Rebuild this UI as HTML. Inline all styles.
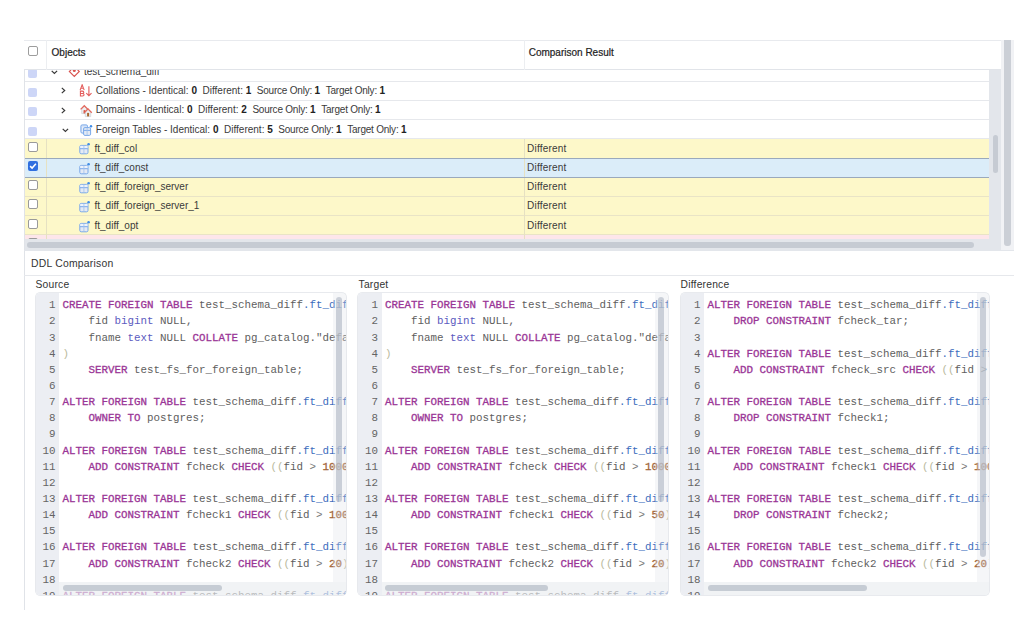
<!DOCTYPE html>
<html><head><meta charset="utf-8"><style>
*{margin:0;padding:0;box-sizing:border-box}
html,body{width:1024px;height:621px;overflow:hidden;background:#fff}
body{position:relative;font-family:"Liberation Sans",sans-serif;font-size:10px;color:#3a3a3a}
.a{position:absolute}
.t{position:absolute;white-space:pre;line-height:12px}
.hl{position:absolute;height:1px;background:#e3e6eb}
.vl{position:absolute;width:1px;background:#e3e6eb}
.sq{position:absolute;left:28px;width:9px;height:9px;border-radius:2px;background:#cdd6f7}
.cb{position:absolute;left:28px;width:10px;height:10px;border-radius:2px;border:1px solid #9a9a9a;background:#fff}
b{font-weight:bold;color:#222}
.ls{letter-spacing:-0.22px}
.code{position:absolute;top:292.5px;width:310px;height:302.5px;border-radius:4px;background:#fff;overflow:hidden;box-shadow:0 0 0 0.8px #e1e4e9}
.gut{position:absolute;left:0;top:0;width:23.5px;height:100%;background:#eceef3}
.lines{position:absolute;left:0;top:0;width:100%;font-family:"Liberation Mono",monospace;font-size:10.83px;line-height:16.15px;color:#5e5e5e;white-space:pre}
.ln{position:absolute;left:0;width:20px;text-align:right;color:#646464}
.cl{position:absolute;left:27px}
.k{color:#9a3596;-webkit-text-stroke:0.3px #9a3596}
.v{color:#3d6dbd}
.ty{color:#5b5bc0}
.br{color:#b9b99c}
.n{color:#a2663a;-webkit-text-stroke:0.3px #a2663a}
.op{color:#777}
.vtrack{position:absolute;top:0;right:0;width:12.5px;height:289.5px;background:rgba(222,226,232,0.3)}
.vthumb{position:absolute;top:4px;right:3.4px;width:6px;height:197px;border-radius:3px;background:rgba(184,191,203,0.7)}
.htrack{position:absolute;left:23.5px;bottom:0;right:0;height:13px;background:rgba(234,236,240,0.65)}
.hthumb{position:absolute;bottom:4px;height:5.6px;border-radius:3px;background:rgba(190,196,206,0.85)}
</style></head><body>
<div class="vl" style="left:24px;top:40px;height:570px;background:#e0e3e8"></div>
<div class="a" style="left:25px;top:70px;width:964px;height:169px;overflow:hidden">
<div class="a" style="left:0;top:-8.20px;width:964px;height:20.20px;background:#fff"></div>
<div class="a" style="left:0;top:11.00px;width:964px;height:20.30px;background:#fff"></div>
<div class="a" style="left:0;top:30.30px;width:964px;height:20.20px;background:#fff"></div>
<div class="a" style="left:0;top:49.50px;width:964px;height:20.30px;background:#fff"></div>
<div class="a" style="left:0;top:68.80px;width:964px;height:20.40px;background:#fdf8c9"></div>
<div class="a" style="left:0;top:88.20px;width:964px;height:19.80px;background:#dbedf9"></div>
<div class="a" style="left:0;top:107.00px;width:964px;height:20.40px;background:#fdf8c9"></div>
<div class="a" style="left:0;top:126.40px;width:964px;height:20.50px;background:#fdf8c9"></div>
<div class="a" style="left:0;top:145.90px;width:964px;height:20.00px;background:#fdf8c9"></div>
<div class="a" style="left:0;top:164.90px;width:964px;height:20.10px;background:#fde6ea"></div>
<div class="a" style="left:0;top:10.50px;width:964px;height:1px;background:#e6e8ec"></div>
<div class="a" style="left:0;top:29.80px;width:964px;height:1px;background:#e6e8ec"></div>
<div class="a" style="left:0;top:49.00px;width:964px;height:1px;background:#e6e8ec"></div>
<div class="a" style="left:0;top:68.30px;width:964px;height:1px;background:#e6e8ec"></div>
<div class="a" style="left:0;top:125.90px;width:964px;height:1px;background:#e9e4c6"></div>
<div class="a" style="left:0;top:145.40px;width:964px;height:1px;background:#e9e4c6"></div>
<div class="a" style="left:0;top:164.40px;width:964px;height:1px;background:#e9e4c6"></div>
<div class="a" style="left:0;top:183.50px;width:964px;height:1px;background:#e6e8ec"></div>
<div class="a" style="left:21px;top:68.80px;width:1px;height:115.20px;background:#e6e1c2"></div>
<div class="a" style="left:499px;top:68.80px;width:1px;height:115.20px;background:#e6e1c2"></div>
<div class="a" style="left:0;top:88px;width:964px;height:1px;background:#9aa9bc"></div>
<div class="a" style="left:0;top:107px;width:964px;height:1px;background:#9aa9bc"></div>
<div class="sq" style="left:3.2px;top:-1.10px"></div>
<svg class="a" style="left:25.80px;top:0.10px" width="7" height="5" viewBox="0 0 7 5"><path d="M0.7 0.8 L3.4 3.5 L6.1 0.8" fill="none" stroke="#383838" stroke-width="1.2"/></svg>
<svg class="a" style="left:43.3px;top:-4.8000000000000025px" width="13" height="13" viewBox="0 0 13 13"><path d="M6.3 1.5 L11.3 6.5 L6.3 11.5 L1.3 6.5 Z" fill="none" stroke="#d9534f" stroke-width="1.1"/><circle cx="6.3" cy="5.6" r="1.5" fill="#d9534f"/></svg>
<div class="t" style="left:59px;top:-4.20px">test_schema_diff</div>
<div class="sq" style="left:3.2px;top:18.10px"></div>
<svg class="a" style="left:36.00px;top:17.40px" width="5" height="7" viewBox="0 0 5 7"><path d="M0.8 0.9 L3.7 3.5 L0.8 6.1" fill="none" stroke="#383838" stroke-width="1.2"/></svg>
<svg class="a" style="left:54.3px;top:14.4px" width="14" height="13" viewBox="0 0 14 13"><path d="M1.1 6.1 L3.15 0.7 L5.2 6.1 M1.8 4.3 H4.5" fill="none" stroke="#e35b5b" stroke-width="1.05"/><path d="M1.4 7.1 H3.3 Q4.8 7.1 4.8 8.5 Q4.8 9.4 3.4 9.4 H1.4 M3.4 9.4 Q5.1 9.4 5.1 10.8 Q5.1 11.9 3.4 11.9 H1.4 M1.4 6.6 V12.4" fill="none" stroke="#e35b5b" stroke-width="1.05"/><path d="M9.9 2.2 V11.6 M7.3 9.1 L9.9 11.8 L12.5 9.1" fill="none" stroke="#e35b5b" stroke-width="1.1"/></svg>
<div class="t" style="left:70.8px;top:15.00px">Collations - Identical: <b>0</b>  Different: <b>1</b>  <span class="ls">Source Only: </span><b>1</b>  <span class="ls">Target Only: </span><b>1</b></div>
<div class="sq" style="left:3.2px;top:37.40px"></div>
<svg class="a" style="left:36.00px;top:36.70px" width="5" height="7" viewBox="0 0 5 7"><path d="M0.8 0.9 L3.7 3.5 L0.8 6.1" fill="none" stroke="#383838" stroke-width="1.2"/></svg>
<svg class="a" style="left:54.3px;top:33.699999999999996px" width="14" height="14" viewBox="0 0 14 14"><g transform="translate(0.7,-0.2)"><path d="M2 5 L4.6 2.6 L7.2 5 V9.8 H2 Z" fill="#eef0f2" stroke="#c3c9cf" stroke-width="0.6"/><path d="M0.9 5.6 L4.6 1.9 L8.3 5.6" fill="none" stroke="#e36a5f" stroke-width="1.3"/><rect x="3.9" y="6.4" width="1.7" height="3.2" fill="#d2452e"/><path d="M5.6 8.3 L8.3 5.8 L11 8.3 V12.8 H5.6 Z" fill="#eef0f2" stroke="#c3c9cf" stroke-width="0.6"/><path d="M4.5 8.9 L8.3 5.1 L12.1 8.9" fill="none" stroke="#e36a5f" stroke-width="1.3"/><rect x="7.4" y="9.1" width="2" height="3.5" fill="#a8672e"/></g></svg>
<div class="t" style="left:70.8px;top:34.30px">Domains - Identical: <b>0</b>  Different: <b>2</b>  <span class="ls">Source Only: </span><b>1</b>  <span class="ls">Target Only: </span><b>1</b></div>
<div class="sq" style="left:3.2px;top:56.60px"></div>
<svg class="a" style="left:36.70px;top:57.80px" width="7" height="5" viewBox="0 0 7 5"><path d="M0.7 0.8 L3.4 3.5 L6.1 0.8" fill="none" stroke="#383838" stroke-width="1.2"/></svg>
<svg class="a" style="left:54.3px;top:52.9px" width="14" height="14" viewBox="0 0 14 14"><rect x="1.9" y="1.9" width="6.6" height="8.2" rx="1.3" fill="#d6e4f8" stroke="#7aa9e9" stroke-width="1"/><path d="M3.6 4 V9" stroke="#eef3fb" stroke-width="0.9"/><rect x="4.6" y="4.6" width="7" height="7.8" rx="1.3" fill="#e4eaf4" stroke="#7aa9e9" stroke-width="1"/><path d="M4.8 7.4 H11.4" stroke="#7aa9e9" stroke-width="1"/><path d="M8.1 4.8 V12.2" stroke="#9fc0ee" stroke-width="0.8"/><circle cx="12" cy="3.3" r="1.2" fill="#3f8ce6"/></svg>
<div class="t" style="left:70.8px;top:53.50px">Foreign Tables - Identical: <b>0</b>  Different: <b>5</b>  <span class="ls">Source Only: </span><b>1</b>  <span class="ls">Target Only: </span><b>1</b></div>
<div class="cb" style="left:3px;top:71.70px"></div>
<svg class="a" style="left:53.0px;top:72.4px" width="13" height="13" viewBox="0 0 13 13"><rect x="1.8" y="3.4" width="8.2" height="8.4" rx="1.4" fill="#e4eaf4" stroke="#7aa9e9" stroke-width="1"/><rect x="2.3" y="3.9" width="7.2" height="2.5" fill="#eef3fb"/><path d="M2 6.7 H9.8" stroke="#7aa9e9" stroke-width="1"/><path d="M5.9 3.6 V11.6" stroke="#9fc0ee" stroke-width="0.8"/><circle cx="10.6" cy="2.3" r="1.3" fill="#3f8ce6"/></svg>
<div class="t" style="left:69.5px;top:72.80px">ft_diff_col</div>
<div class="t" style="left:502px;top:72.80px;letter-spacing:0.22px">Different</div>
<svg class="a" style="left:3px;top:91.10px" width="10" height="10" viewBox="0 0 10 10"><rect x="0" y="0" width="10" height="10" rx="2" fill="#2f6fe0"/><path d="M2.1 5.1 L4.1 7.1 L7.9 2.8" fill="none" stroke="#fff" stroke-width="1.5"/></svg>
<svg class="a" style="left:53.0px;top:91.79999999999998px" width="13" height="13" viewBox="0 0 13 13"><rect x="1.8" y="3.4" width="8.2" height="8.4" rx="1.4" fill="#e4eaf4" stroke="#7aa9e9" stroke-width="1"/><rect x="2.3" y="3.9" width="7.2" height="2.5" fill="#eef3fb"/><path d="M2 6.7 H9.8" stroke="#7aa9e9" stroke-width="1"/><path d="M5.9 3.6 V11.6" stroke="#9fc0ee" stroke-width="0.8"/><circle cx="10.6" cy="2.3" r="1.3" fill="#3f8ce6"/></svg>
<div class="t" style="left:69.5px;top:92.20px">ft_diff_const</div>
<div class="t" style="left:502px;top:92.20px;letter-spacing:0.22px">Different</div>
<div class="cb" style="left:3px;top:109.90px"></div>
<svg class="a" style="left:53.0px;top:110.6px" width="13" height="13" viewBox="0 0 13 13"><rect x="1.8" y="3.4" width="8.2" height="8.4" rx="1.4" fill="#e4eaf4" stroke="#7aa9e9" stroke-width="1"/><rect x="2.3" y="3.9" width="7.2" height="2.5" fill="#eef3fb"/><path d="M2 6.7 H9.8" stroke="#7aa9e9" stroke-width="1"/><path d="M5.9 3.6 V11.6" stroke="#9fc0ee" stroke-width="0.8"/><circle cx="10.6" cy="2.3" r="1.3" fill="#3f8ce6"/></svg>
<div class="t" style="left:69.5px;top:111.00px">ft_diff_foreign_server</div>
<div class="t" style="left:502px;top:111.00px;letter-spacing:0.22px">Different</div>
<div class="cb" style="left:3px;top:129.30px"></div>
<svg class="a" style="left:53.0px;top:130.0px" width="13" height="13" viewBox="0 0 13 13"><rect x="1.8" y="3.4" width="8.2" height="8.4" rx="1.4" fill="#e4eaf4" stroke="#7aa9e9" stroke-width="1"/><rect x="2.3" y="3.9" width="7.2" height="2.5" fill="#eef3fb"/><path d="M2 6.7 H9.8" stroke="#7aa9e9" stroke-width="1"/><path d="M5.9 3.6 V11.6" stroke="#9fc0ee" stroke-width="0.8"/><circle cx="10.6" cy="2.3" r="1.3" fill="#3f8ce6"/></svg>
<div class="t" style="left:69.5px;top:130.40px">ft_diff_foreign_server_1</div>
<div class="t" style="left:502px;top:130.40px;letter-spacing:0.22px">Different</div>
<div class="cb" style="left:3px;top:148.80px"></div>
<svg class="a" style="left:53.0px;top:149.5px" width="13" height="13" viewBox="0 0 13 13"><rect x="1.8" y="3.4" width="8.2" height="8.4" rx="1.4" fill="#e4eaf4" stroke="#7aa9e9" stroke-width="1"/><rect x="2.3" y="3.9" width="7.2" height="2.5" fill="#eef3fb"/><path d="M2 6.7 H9.8" stroke="#7aa9e9" stroke-width="1"/><path d="M5.9 3.6 V11.6" stroke="#9fc0ee" stroke-width="0.8"/><circle cx="10.6" cy="2.3" r="1.3" fill="#3f8ce6"/></svg>
<div class="t" style="left:69.5px;top:149.90px">ft_diff_opt</div>
<div class="t" style="left:502px;top:149.90px;letter-spacing:0.22px">Different</div>
<div class="cb" style="left:3px;top:167.80px"></div>
<svg class="a" style="left:53.0px;top:168.5px" width="13" height="13" viewBox="0 0 13 13"><rect x="1.8" y="3.4" width="8.2" height="8.4" rx="1.4" fill="#e4eaf4" stroke="#7aa9e9" stroke-width="1"/><rect x="2.3" y="3.9" width="7.2" height="2.5" fill="#eef3fb"/><path d="M2 6.7 H9.8" stroke="#7aa9e9" stroke-width="1"/><path d="M5.9 3.6 V11.6" stroke="#9fc0ee" stroke-width="0.8"/><circle cx="10.6" cy="2.3" r="1.3" fill="#3f8ce6"/></svg>
</div>
<div class="a" style="left:24px;top:40px;width:977px;height:30px;background:#fff"></div>
<div class="hl" style="left:24px;top:39.6px;width:977px;background:#e8eaee"></div>
<div class="hl" style="left:24px;top:69.4px;width:977px;background:#e1e4e9"></div>
<div class="vl" style="left:46px;top:40px;height:30px;background:#eceef1"></div>
<div class="vl" style="left:524px;top:40px;height:30px;background:#eceef1"></div>
<div class="vl" style="left:1000.5px;top:40px;height:30px;background:#e6e8ec"></div>
<div class="cb" style="top:46px;border-color:#9d9d9d"></div>
<div class="t" style="left:51.6px;top:47px;color:#222;-webkit-text-stroke:0.2px #222">Objects</div>
<div class="t" style="left:528.7px;top:47px;color:#222;-webkit-text-stroke:0.2px #222">Comparison Result</div>
<div class="a" style="left:25px;top:239px;width:976px;height:11.5px;background:#e3e6eb"></div>
<div class="a" style="left:27px;top:242px;width:947px;height:6px;border-radius:3px;background:#c6cbd3"></div>
<div class="a" style="left:989px;top:70px;width:12px;height:180.5px;background:#e3e6eb"></div>
<div class="a" style="left:992.8px;top:134.5px;width:5.2px;height:38.5px;border-radius:3px;background:#c6cbd3"></div>
<div class="a" style="left:1001px;top:40px;width:12.5px;height:210.5px;background:#f1f2f5"></div>
<div class="a" style="left:1004.3px;top:40px;width:6.3px;height:205.5px;border-radius:0 0 3px 3px;background:#cbcfd6"></div>
<div class="hl" style="left:24px;top:250.2px;width:989.5px;background:#e3e6eb"></div>
<div class="t" style="left:30.9px;top:258.2px;font-size:10.4px;letter-spacing:0.24px;color:#333">DDL Comparison</div>
<div class="hl" style="left:24px;top:275px;width:989.5px;background:#e6e8ec"></div>
<div class="t" style="left:35.5px;top:279px;font-size:10.3px;letter-spacing:0.2px;color:#333">Source</div>
<div class="t" style="left:358.6px;top:279px;font-size:10.3px;letter-spacing:0.2px;color:#333">Target</div>
<div class="t" style="left:680.6px;top:279px;font-size:10.3px;letter-spacing:0.2px;color:#333">Difference</div>
<div class="code" style="left:35.5px;width:310px">
<div class="gut"></div>
<div class="lines">
<div class="ln" style="top:4.70px">1</div>
<div class="cl" style="top:4.70px"><span class="k">CREATE FOREIGN TABLE</span> test_schema_diff<span class="v">.ft_diff_const</span><span class="br">(</span></div>
<div class="ln" style="top:20.85px">2</div>
<div class="cl" style="top:20.85px">    fid <span class="ty">bigint</span> NULL,</div>
<div class="ln" style="top:37.00px">3</div>
<div class="cl" style="top:37.00px">    fname <span class="ty">text</span> NULL <span class="k">COLLATE</span> pg_catalog."default"</div>
<div class="ln" style="top:53.15px">4</div>
<div class="cl" style="top:53.15px"><span class="br">)</span></div>
<div class="ln" style="top:69.30px">5</div>
<div class="cl" style="top:69.30px">    <span class="k">SERVER</span> test_fs_for_foreign_table;</div>
<div class="ln" style="top:85.45px">6</div>
<div class="ln" style="top:101.60px">7</div>
<div class="cl" style="top:101.60px"><span class="k">ALTER FOREIGN TABLE</span> test_schema_diff<span class="v">.ft_diff_const</span></div>
<div class="ln" style="top:117.75px">8</div>
<div class="cl" style="top:117.75px">    <span class="k">OWNER TO</span> postgres;</div>
<div class="ln" style="top:133.90px">9</div>
<div class="ln" style="top:150.05px">10</div>
<div class="cl" style="top:150.05px"><span class="k">ALTER FOREIGN TABLE</span> test_schema_diff<span class="v">.ft_diff_const</span></div>
<div class="ln" style="top:166.20px">11</div>
<div class="cl" style="top:166.20px">    <span class="k">ADD CONSTRAINT</span> fcheck <span class="k">CHECK</span> <span class="br">((</span>fid <span class="op">&gt;</span> <span class="n">1000</span><span class="br">))</span> <span class="k">NO INHERIT</span>;</div>
<div class="ln" style="top:182.35px">12</div>
<div class="ln" style="top:198.50px">13</div>
<div class="cl" style="top:198.50px"><span class="k">ALTER FOREIGN TABLE</span> test_schema_diff<span class="v">.ft_diff_const</span></div>
<div class="ln" style="top:214.65px">14</div>
<div class="cl" style="top:214.65px">    <span class="k">ADD CONSTRAINT</span> fcheck1 <span class="k">CHECK</span> <span class="br">((</span>fid <span class="op">&gt;</span> <span class="n">1000</span><span class="br">))</span> <span class="k">NO INHERIT</span>;</div>
<div class="ln" style="top:230.80px">15</div>
<div class="ln" style="top:246.95px">16</div>
<div class="cl" style="top:246.95px"><span class="k">ALTER FOREIGN TABLE</span> test_schema_diff<span class="v">.ft_diff_const</span></div>
<div class="ln" style="top:263.10px">17</div>
<div class="cl" style="top:263.10px">    <span class="k">ADD CONSTRAINT</span> fcheck2 <span class="k">CHECK</span> <span class="br">((</span>fid <span class="op">&gt;</span> <span class="n">20</span><span class="br">))</span> <span class="k">NO INHERIT</span>;</div>
<div class="ln" style="top:279.25px">18</div>
<div class="ln" style="top:295.40px">19</div>
<div class="cl" style="top:295.40px"><span class="k">ALTER FOREIGN TABLE</span> test_schema_diff<span class="v">.ft_diff_const</span></div>
</div>
<div class="vtrack"><div class="vthumb" style="height:205px"></div></div>
<div class="htrack"><div class="hthumb" style="left:3.6px;width:159px"></div></div>
</div>
<div class="code" style="left:358px;width:309.5px">
<div class="gut"></div>
<div class="lines">
<div class="ln" style="top:4.70px">1</div>
<div class="cl" style="top:4.70px"><span class="k">CREATE FOREIGN TABLE</span> test_schema_diff<span class="v">.ft_diff_const</span><span class="br">(</span></div>
<div class="ln" style="top:20.85px">2</div>
<div class="cl" style="top:20.85px">    fid <span class="ty">bigint</span> NULL,</div>
<div class="ln" style="top:37.00px">3</div>
<div class="cl" style="top:37.00px">    fname <span class="ty">text</span> NULL <span class="k">COLLATE</span> pg_catalog."default"</div>
<div class="ln" style="top:53.15px">4</div>
<div class="cl" style="top:53.15px"><span class="br">)</span></div>
<div class="ln" style="top:69.30px">5</div>
<div class="cl" style="top:69.30px">    <span class="k">SERVER</span> test_fs_for_foreign_table;</div>
<div class="ln" style="top:85.45px">6</div>
<div class="ln" style="top:101.60px">7</div>
<div class="cl" style="top:101.60px"><span class="k">ALTER FOREIGN TABLE</span> test_schema_diff<span class="v">.ft_diff_const</span></div>
<div class="ln" style="top:117.75px">8</div>
<div class="cl" style="top:117.75px">    <span class="k">OWNER TO</span> postgres;</div>
<div class="ln" style="top:133.90px">9</div>
<div class="ln" style="top:150.05px">10</div>
<div class="cl" style="top:150.05px"><span class="k">ALTER FOREIGN TABLE</span> test_schema_diff<span class="v">.ft_diff_const</span></div>
<div class="ln" style="top:166.20px">11</div>
<div class="cl" style="top:166.20px">    <span class="k">ADD CONSTRAINT</span> fcheck <span class="k">CHECK</span> <span class="br">((</span>fid <span class="op">&gt;</span> <span class="n">1000</span><span class="br">))</span> <span class="k">NO INHERIT</span>;</div>
<div class="ln" style="top:182.35px">12</div>
<div class="ln" style="top:198.50px">13</div>
<div class="cl" style="top:198.50px"><span class="k">ALTER FOREIGN TABLE</span> test_schema_diff<span class="v">.ft_diff_const</span></div>
<div class="ln" style="top:214.65px">14</div>
<div class="cl" style="top:214.65px">    <span class="k">ADD CONSTRAINT</span> fcheck1 <span class="k">CHECK</span> <span class="br">((</span>fid <span class="op">&gt;</span> <span class="n">50</span><span class="br">))</span> <span class="k">NO INHERIT</span>;</div>
<div class="ln" style="top:230.80px">15</div>
<div class="ln" style="top:246.95px">16</div>
<div class="cl" style="top:246.95px"><span class="k">ALTER FOREIGN TABLE</span> test_schema_diff<span class="v">.ft_diff_const</span></div>
<div class="ln" style="top:263.10px">17</div>
<div class="cl" style="top:263.10px">    <span class="k">ADD CONSTRAINT</span> fcheck2 <span class="k">CHECK</span> <span class="br">((</span>fid <span class="op">&gt;</span> <span class="n">20</span><span class="br">))</span> <span class="k">NO INHERIT</span>;</div>
<div class="ln" style="top:279.25px">18</div>
<div class="ln" style="top:295.40px">19</div>
<div class="cl" style="top:295.40px"><span class="k">ALTER FOREIGN TABLE</span> test_schema_diff<span class="v">.ft_diff_const</span></div>
</div>
<div class="vtrack"><div class="vthumb" style="height:205px"></div></div>
<div class="htrack"><div class="hthumb" style="left:3.6px;width:163px"></div></div>
</div>
<div class="code" style="left:680.5px;width:308.7px">
<div class="gut"></div>
<div class="lines">
<div class="ln" style="top:4.70px">1</div>
<div class="cl" style="top:4.70px"><span class="k">ALTER FOREIGN TABLE</span> test_schema_diff<span class="v">.ft_diff_const</span></div>
<div class="ln" style="top:20.85px">2</div>
<div class="cl" style="top:20.85px">    <span class="k">DROP CONSTRAINT</span> fcheck_tar;</div>
<div class="ln" style="top:37.00px">3</div>
<div class="ln" style="top:53.15px">4</div>
<div class="cl" style="top:53.15px"><span class="k">ALTER FOREIGN TABLE</span> test_schema_diff<span class="v">.ft_diff_const</span></div>
<div class="ln" style="top:69.30px">5</div>
<div class="cl" style="top:69.30px">    <span class="k">ADD CONSTRAINT</span> fcheck_src <span class="k">CHECK</span> <span class="br">((</span>fid <span class="op">&gt;</span> <span class="n">1000</span><span class="br">))</span> <span class="k">NO INHERIT</span>;</div>
<div class="ln" style="top:85.45px">6</div>
<div class="ln" style="top:101.60px">7</div>
<div class="cl" style="top:101.60px"><span class="k">ALTER FOREIGN TABLE</span> test_schema_diff<span class="v">.ft_diff_const</span></div>
<div class="ln" style="top:117.75px">8</div>
<div class="cl" style="top:117.75px">    <span class="k">DROP CONSTRAINT</span> fcheck1;</div>
<div class="ln" style="top:133.90px">9</div>
<div class="ln" style="top:150.05px">10</div>
<div class="cl" style="top:150.05px"><span class="k">ALTER FOREIGN TABLE</span> test_schema_diff<span class="v">.ft_diff_const</span></div>
<div class="ln" style="top:166.20px">11</div>
<div class="cl" style="top:166.20px">    <span class="k">ADD CONSTRAINT</span> fcheck1 <span class="k">CHECK</span> <span class="br">((</span>fid <span class="op">&gt;</span> <span class="n">1000</span><span class="br">))</span> <span class="k">NO INHERIT</span>;</div>
<div class="ln" style="top:182.35px">12</div>
<div class="ln" style="top:198.50px">13</div>
<div class="cl" style="top:198.50px"><span class="k">ALTER FOREIGN TABLE</span> test_schema_diff<span class="v">.ft_diff_const</span></div>
<div class="ln" style="top:214.65px">14</div>
<div class="cl" style="top:214.65px">    <span class="k">DROP CONSTRAINT</span> fcheck2;</div>
<div class="ln" style="top:230.80px">15</div>
<div class="ln" style="top:246.95px">16</div>
<div class="cl" style="top:246.95px"><span class="k">ALTER FOREIGN TABLE</span> test_schema_diff<span class="v">.ft_diff_const</span></div>
<div class="ln" style="top:263.10px">17</div>
<div class="cl" style="top:263.10px">    <span class="k">ADD CONSTRAINT</span> fcheck2 <span class="k">CHECK</span> <span class="br">((</span>fid <span class="op">&gt;</span> <span class="n">20</span><span class="br">))</span> <span class="k">NO INHERIT</span>;</div>
<div class="ln" style="top:279.25px">18</div>
<div class="ln" style="top:295.40px">19</div>
</div>
<div class="vtrack"><div class="vthumb" style="height:260px"></div></div>
<div class="htrack"><div class="hthumb" style="left:3.6px;width:159px"></div></div>
</div>
</body></html>
